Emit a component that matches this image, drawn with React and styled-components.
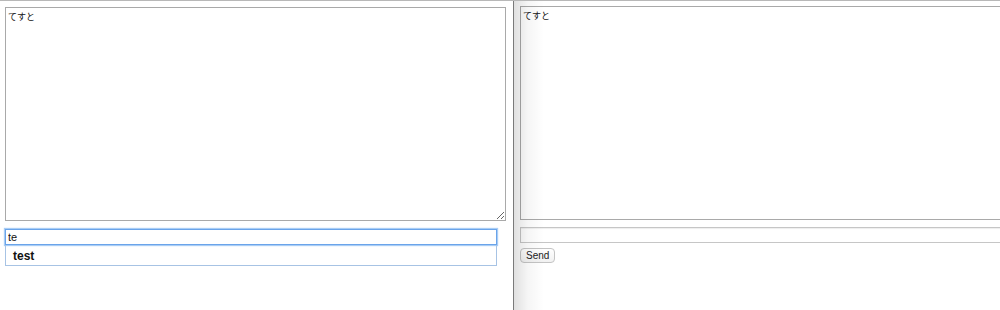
import React from "react";
import styled, { createGlobalStyle } from "styled-components";

const GlobalStyle = createGlobalStyle`
  html, body { margin: 0; padding: 0; background: #fff; }
  body { font-family: "Liberation Sans", "Noto Sans CJK JP", sans-serif; }
`;

const Desktop = styled.div`
  display: flex;
  width: 1000px;
  height: 310px;
  overflow: hidden;
  border-top: 1px solid #b8b8b8;
  box-sizing: border-box;
`;

const Pane = styled.div`
  position: relative;
  display: flex;
  flex-direction: column;
  box-sizing: border-box;
  background: #fff;
  width: ${(p) => p.$width || "auto"};
  flex: ${(p) => (p.$grow ? 1 : "none")};
  padding: ${(p) => p.$pad};
  overflow: hidden;
  ${(p) =>
    p.$shadowed &&
    `
    border-left: 1px solid #7a7a7a;
    &::after {
      content: "";
      position: absolute;
      left: 0; top: 0; bottom: 0;
      width: 30px;
      pointer-events: none;
      background: linear-gradient(to right, rgba(0,0,0,0.12), rgba(0,0,0,0.04) 45%, rgba(0,0,0,0));
    }
  `}
`;

const Log = styled.textarea`
  box-sizing: border-box;
  width: ${(p) => p.$width};
  height: ${(p) => p.$height};
  margin: 0;
  padding: 3px 2px;
  border: 1px solid #a9a9a9;
  font-family: "Noto Sans CJK JP", sans-serif;
  font-size: 9px;
  line-height: 12px;
  color: #111;
  resize: ${(p) => (p.$resize ? "both" : "none")};
  outline: none;
`;

const Field = styled.input`
  box-sizing: border-box;
  width: ${(p) => p.$width};
  height: 16px;
  margin: ${(p) => p.$margin};
  padding: 0 2px;
  font-family: "Liberation Sans", sans-serif;
  font-size: 11px;
  color: #111;
  border: 1px solid ${(p) => (p.$focus ? "#6aa4ea" : "#c6c6c6")};
  box-shadow: ${(p) => (p.$focus ? "0 0 1px 1px #a9cdf5" : "inset 0 1px 1px #eee")};
  outline: none;
`;

const Suggestions = styled.ul`
  list-style: none;
  margin: 0;
  padding: 0;
  width: 492px;
  box-sizing: border-box;
  border: 1px solid #a7c3e4;
  border-top: none;
`;

const Suggestion = styled.li`
  height: 20px;
  line-height: 22px;
  padding-left: 7px;
  font-family: "Liberation Sans", sans-serif;
  font-weight: bold;
  font-size: 12px;
  color: #111;
`;

const SendButton = styled.button`
  align-self: flex-start;
  margin-top: 5px;
  height: 15px;
  padding: 0 5px;
  font-family: "Liberation Sans", sans-serif;
  font-size: 10px;
  color: #222;
  background: linear-gradient(#fff, #f1f1f1);
  border: 1px solid #c4c4c4;
  border-radius: 4px;
  line-height: 13px;
`;

export default function App() {
  return (
    <>
      <GlobalStyle />
      <Desktop>
        <Pane $width="513px" $pad="6px 0 0 5px">
          <Log $width="501px" $height="214px" $resize defaultValue="てすと" />
          <Field $width="492px" $margin="8px 0 0 0" $focus defaultValue="te" />
          <Suggestions>
            <Suggestion>test</Suggestion>
          </Suggestions>
        </Pane>
        <Pane $grow $shadowed $pad="5px 0 0 6px">
          <Log $width="520px" $height="214px" defaultValue="てすと" />
          <Field $width="520px" $margin="7px 0 0 0" />
          <SendButton>Send</SendButton>
        </Pane>
      </Desktop>
    </>
  );
}
